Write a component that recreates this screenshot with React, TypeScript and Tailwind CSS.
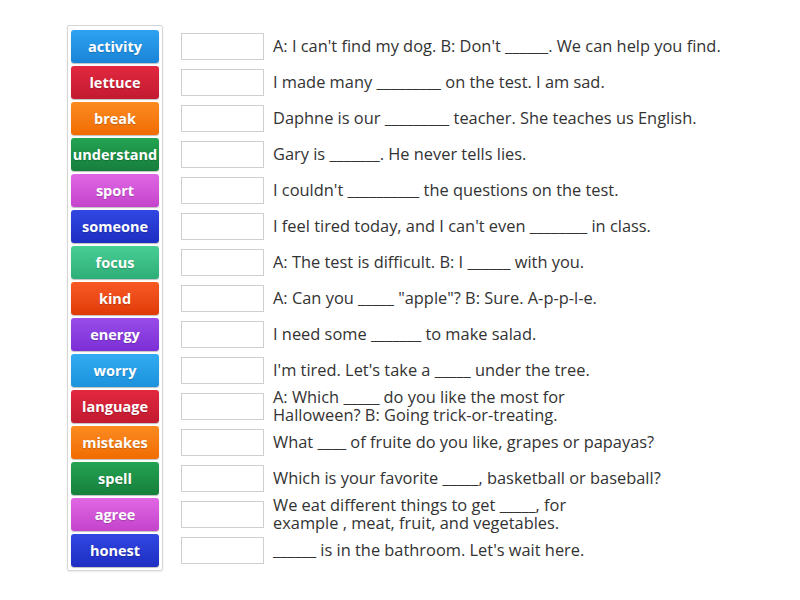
import * as React from "react"

type Tile = { word: string; color: string }

const tiles: Tile[] = [
  { word: "activity", color: "from-[#2ea2f2] to-[#1a84d6]" },
  { word: "lettuce", color: "from-[#e2283f] to-[#c21a31]" },
  { word: "break", color: "from-[#fc8b20] to-[#f06c00]" },
  { word: "understand", color: "from-[#24a352] to-[#167f3c]" },
  { word: "sport", color: "from-[#e067e4] to-[#c443cc]" },
  { word: "someone", color: "from-[#3147e2] to-[#1d2ec2]" },
  { word: "focus", color: "from-[#48cf95] to-[#2eae77]" },
  { word: "kind", color: "from-[#f85a24] to-[#e03a05]" },
  { word: "energy", color: "from-[#984ce9] to-[#7c2ed5]" },
  { word: "worry", color: "from-[#31acf2] to-[#1b92dc]" },
  { word: "language", color: "from-[#e2283f] to-[#c21a31]" },
  { word: "mistakes", color: "from-[#fc8b20] to-[#f06c00]" },
  { word: "spell", color: "from-[#24a352] to-[#167f3c]" },
  { word: "agree", color: "from-[#e067e4] to-[#c443cc]" },
  { word: "honest", color: "from-[#3147e2] to-[#1d2ec2]" },
]

const sentences: string[][] = [
  ["A: I can't find my dog. B: Don't ______. We can help you find."],
  ["I made many _________ on the test. I am sad."],
  ["Daphne is our _________ teacher. She teaches us English."],
  ["Gary is _______. He never tells lies."],
  ["I couldn't __________ the questions on the test."],
  ["I feel tired today, and I can't even ________ in class."],
  ["A: The test is difficult. B: I ______ with you."],
  ["A: Can you _____ \"apple\"? B: Sure. A-p-p-l-e."],
  ["I need some _______ to make salad."],
  ["I'm tired. Let's take a _____ under the tree."],
  ["A: Which _____ do you like the most for", "Halloween? B: Going trick-or-treating."],
  ["What ____ of fruite do you like, grapes or papayas?"],
  ["Which is your favorite _____, basketball or baseball?"],
  ["We eat different things to get _____, for", "example , meat, fruit, and vegetables."],
  ["______ is in the bathroom. Let's wait here."],
]

export default function App() {
  return (
    <div
      className="min-h-screen w-[800px] bg-white pl-[67px] pt-[25px]"
      style={{ fontFamily: '"Open Sans", "Noto Sans", sans-serif' }}
    >
      <div className="flex items-start gap-[18px]">
        <div className="flex w-[96px] flex-col gap-[3px] rounded-[2px] border border-[#d6d6d6] px-[3px] pb-[3px] pt-[4px] shadow-[0_1px_2px_rgba(0,0,0,0.08)]">
          {tiles.map((t) => (
            <div
              key={t.word}
              className={`flex h-[33px] w-[88px] items-center justify-center rounded-[3px] bg-linear-to-b ${t.color} text-[14.5px] font-bold text-white shadow-[0_1px_1px_rgba(0,0,0,0.25)] [text-shadow:0_1px_1px_rgba(0,0,0,0.2)]`}
            >
              {t.word}
            </div>
          ))}
        </div>
        <div className="flex flex-col gap-[3px] pt-[5px]">
          {sentences.map((lines, i) => (
            <div key={i} className="flex h-[33px] items-center gap-[9px]">
              <div className="h-[27px] w-[83px] shrink-0 border border-[#cfcfcf] bg-white" />
              <div className="pb-[2px] text-[16.4px] leading-[18px] text-[#333333]">
                {lines.map((l, j) => (
                  <div key={j} className="whitespace-nowrap">
                    {l}
                  </div>
                ))}
              </div>
            </div>
          ))}
        </div>
      </div>
    </div>
  )
}
